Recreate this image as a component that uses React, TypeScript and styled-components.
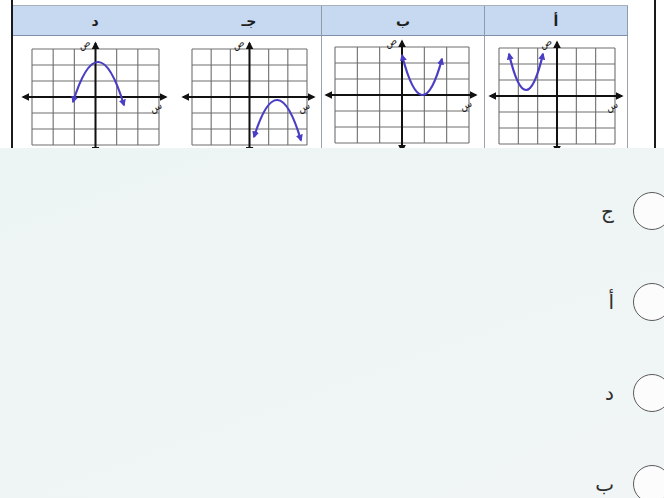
import React from "react";
import styled, { createGlobalStyle } from "styled-components";

const GlobalStyle = createGlobalStyle`
  html, body { margin: 0; padding: 0; }
  body {
    overflow: hidden;
    font-family: "DejaVu Sans", "Noto Sans", sans-serif;
    background: #eef4f5;
  }
`;

const Page = styled.div`
  width: 664px;
  height: 498px;
  display: flex;
  flex-direction: column;
  overflow: hidden;
`;

const Picture = styled.div`
  height: 148px;
  flex: none;
  background: #ffffff;
  padding-left: 11px;
  overflow: hidden;
`;

const Frame = styled.div`
  box-sizing: border-box;
  width: 645px;
  height: 148px;
  border-left: 2px solid #1a1a1a;
  border-right: 2px solid #1a1a1a;
  padding-top: 5px;
`;

const Table = styled.div`
  direction: rtl;
  width: 615px;
  display: grid;
  grid-template-columns: 143px 163px 145px 164px;
  grid-template-rows: 30px 112px;
  border-top: 1px solid #a9b1ba;
`;

const HeadCell = styled.div<{ $last?: boolean }>`
  box-sizing: border-box;
  background: #c6d9f1;
  border-right: ${(p) => (p.$last ? "none" : "1px solid #8e9aa8")};
  border-bottom: 1px solid #7d91ab;
  display: flex;
  align-items: center;
  justify-content: center;
  font-weight: bold;
  font-size: 14px;
  color: #1e1e1e;
`;

const BodyCell = styled.div<{ $last?: boolean }>`
  box-sizing: border-box;
  background: #ffffff;
  border-right: ${(p) => (p.$last ? "none" : "1px solid #9aa3ad")};
  overflow: hidden;
  direction: ltr;
`;

const Bottom = styled.div`
  flex: 1;
  background: linear-gradient(160deg, #edf4f4 0%, #eff5f5 55%, #f1f5f6 100%);
  display: flex;
  flex-direction: column;
  align-items: flex-end;
  padding-top: 44px;
  gap: 53px;
  margin-right: -7px;
`;

const Option = styled.label`
  display: flex;
  align-items: center;
  gap: 19px;
  height: 38px;
`;

const OptionText = styled.span`
  font-size: 20px;
  color: #2e2e2e;
  line-height: 1;
`;

const Radio = styled.span`
  box-sizing: border-box;
  width: 38px;
  height: 38px;
  border-radius: 50%;
  border: 1.6px solid #5a5a5a;
  background: #fcfcfc;
  flex: none;
`;

type GraphSpec = {
  label: string;
  left: number;
  width: number;
  gx0: number;
  gx1: number;
  gy0: number;
  h: number;
  v: number;
  k: number;
  x1: number;
  x2: number;
};

const graphs: GraphSpec[] = [
  { label: "أ", left: 485, width: 143, gx0: 499, gx1: 615, gy0: 48, h: 526, v: 90, k: -0.125, x1: 509, x2: 543 },
  { label: "ب", left: 322, width: 163, gx0: 335, gx1: 469, gy0: 47, h: 422.5, v: 95, k: -0.095, x1: 402, x2: 442 },
  { label: "جـ", left: 177, width: 145, gx0: 192, gx1: 307, gy0: 49, h: 277, v: 100, k: 0.07, x1: 254, x2: 301 },
  { label: "د", left: 13, width: 164, gx0: 32, gx1: 159, gy0: 49, h: 98, v: 62, k: 0.064, x1: 73, x2: 124 },
];

function parabolaPath(g: GraphSpec) {
  const f = (x: number) => g.v + g.k * (x - g.h) * (x - g.h);
  const y1 = f(g.x1);
  const y2 = f(g.x2);
  const xc = (g.x1 + g.x2) / 2;
  const slope = 2 * g.k * (g.x1 - g.h);
  const yc = y1 + slope * (xc - g.x1);
  return `M${g.x1} ${y1} Q${xc} ${yc} ${g.x2} ${y2}`;
}

const Graph: React.FC<{ g: GraphSpec; idx: number }> = ({ g, idx }) => {
  const colW = (g.gx1 - g.gx0) / 6;
  const rowH = 16;
  const yAxisX = g.gx0 + 3 * colW;
  const xAxisY = g.gy0 + 3 * rowH;
  const gridBottom = g.gy0 + 6 * rowH;
  const vs = Array.from({ length: 7 }, (_, i) => g.gx0 + i * colW);
  const hs = Array.from({ length: 7 }, (_, i) => g.gy0 + i * rowH);
  const mAxis = `ax${idx}`;
  const mCurve = `cv${idx}`;
  return (
    <svg width={g.width - 1} height={112} viewBox={`${g.left} 36 ${g.width - 1} 112`}>
      <defs>
        <marker id={mAxis} viewBox="0 0 10 10" refX="8" refY="5" markerWidth="4" markerHeight="4" orient="auto-start-reverse">
          <path d="M0 0 L10 5 L0 10 z" fill="#111" />
        </marker>
        <marker id={mCurve} viewBox="0 0 10 10" refX="8" refY="5" markerWidth="3.2" markerHeight="3.2" orient="auto-start-reverse">
          <path d="M0 0 L10 5 L0 10 z" fill="#4a3fc4" />
        </marker>
      </defs>
      {vs.map((x) => (
        <line key={`v${x}`} x1={x} y1={g.gy0} x2={x} y2={gridBottom} stroke="#6e6e6e" strokeWidth={1.1} />
      ))}
      {hs.map((y) => (
        <line key={`h${y}`} x1={g.gx0} y1={y} x2={g.gx1} y2={y} stroke="#6e6e6e" strokeWidth={1.1} />
      ))}
      <line x1={g.gx0 - 9} y1={xAxisY} x2={g.gx1 + 7} y2={xAxisY} stroke="#111" strokeWidth={2} markerStart={`url(#${mAxis})`} markerEnd={`url(#${mAxis})`} />
      <line x1={yAxisX} y1={gridBottom + 8} x2={yAxisX} y2={g.gy0 - 6} stroke="#111" strokeWidth={2} markerStart={`url(#${mAxis})`} markerEnd={`url(#${mAxis})`} />
      <path d={parabolaPath(g)} fill="none" stroke="#4a3fc4" strokeWidth={2.2} markerStart={`url(#${mCurve})`} markerEnd={`url(#${mCurve})`} />
      <text x={yAxisX - 17} y={g.gy0 - 1} fontSize={10} fill="#222" transform={`rotate(-25 ${yAxisX - 12} ${g.gy0 - 4})`} fontFamily="DejaVu Sans, sans-serif">ص</text>
      <text x={g.gx1 - 9} y={xAxisY + 14} fontSize={10} fill="#222" transform={`rotate(-25 ${g.gx1 - 4} ${xAxisY + 11})`} fontFamily="DejaVu Sans, sans-serif">س</text>
    </svg>
  );
};

const options = ["ج", "أ", "د", "ب"];

export default function App() {
  return (
    <Page>
      <GlobalStyle />
      <Picture>
        <Frame>
          <Table>
            {graphs.map((g, i) => (
              <HeadCell key={`h${i}`} $last={i === graphs.length - 1}>{g.label}</HeadCell>
            ))}
            {graphs.map((g, i) => (
              <BodyCell key={`b${i}`} $last={i === graphs.length - 1}>
                <Graph g={g} idx={i} />
              </BodyCell>
            ))}
          </Table>
        </Frame>
      </Picture>
      <Bottom>
        {options.map((o) => (
          <Option key={o}>
            <OptionText>{o}</OptionText>
            <Radio />
          </Option>
        ))}
      </Bottom>
    </Page>
  );
}
